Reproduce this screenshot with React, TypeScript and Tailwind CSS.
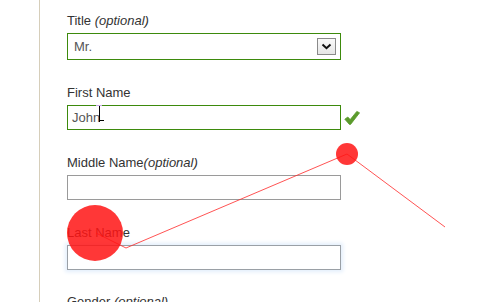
import React from "react";

const FONT = { fontFamily: '"Liberation Sans", Arial, sans-serif' };

function Label({ text, optional, tight }: { text: string; optional?: boolean; tight?: boolean }) {
  return (
    <div className="mb-[5px] h-[15px] text-[13px] leading-[15px] text-[#333]">
      {text}
      {optional && (
        <>
          {tight ? "" : " "}
          <i>(optional)</i>
        </>
      )}
    </div>
  );
}

function ChevronButton() {
  return (
    <div className="absolute right-[4px] top-[4px] flex h-[17px] w-[19px] items-center justify-center border border-[#8a8a8a] bg-gradient-to-b from-[#fafafa] to-[#e6e6e6]">
      <svg width="11" height="7" viewBox="0 0 11 7">
        <path d="M1.5 1.5 L5.5 5.2 L9.5 1.5" fill="none" stroke="#111" strokeWidth="2" />
      </svg>
    </div>
  );
}

function Check() {
  return (
    <svg width="16" height="16" viewBox="0 0 16 16" className="ml-[3px] mt-[5px]">
      <path
        d="M0.8 9.2 L3.8 7 L6.2 9.6 L12.8 1.4 L15.6 2.8 L6.6 14.4 L5.4 14.4 Z"
        fill="#5b9a2c"
        stroke="#5b9a2c"
        strokeWidth="0.8"
        strokeLinejoin="round"
      />
    </svg>
  );
}

export default function App() {
  return (
    <div className="relative h-[302px] w-[487px] overflow-hidden bg-white" style={FONT}>
      <div className="ml-[39px] h-full border-l border-[#d6ceba] pl-[27px] pt-[13px]">
        <Label text="Title" optional />
        <div className="relative h-[27px] w-[274px] border border-[#3d8a0c] bg-white pl-[6px] text-[13px] leading-[25px] text-[#555]">
          Mr.
          <ChevronButton />
        </div>

        <div className="mt-[25px]">
          <Label text="First Name" />
          <div className="flex items-start">
            <div className="relative h-[25px] w-[274px] border border-[#3d8a0c] pl-[4px] text-[13px] leading-[23px] text-[#555]">
              John
              <div className="absolute left-[31px] top-[0px] h-[16px] w-px bg-black" />
              <div className="absolute left-[28px] top-[-1px] h-px w-[6px] bg-[#c9a6e8]" />
              <div className="absolute left-[31px] top-[14px] h-px w-[5px] bg-black" />
            </div>
            <Check />
          </div>
        </div>

        <div className="mt-[25px]">
          <Label text="Middle Name" optional tight />
          <div className="h-[25px] w-[274px] border border-[#9a9a9a]" />
        </div>

        <div className="mt-[25px]">
          <Label text="Last Name" />
          <div className="h-[25px] w-[274px] border border-[#9aa0a6] shadow-[0_0_4px_2px_#e3eefb]" />
        </div>

        <div className="mt-[24px]">
          <Label text="Gender" optional />
        </div>
      </div>

      <svg className="pointer-events-none absolute left-0 top-0" width="487" height="302">
        <polyline
          points="96,233 126,248 347,154 445,227"
          fill="none"
          stroke="rgba(255,40,40,0.8)"
          strokeWidth="1"
        />
        <circle cx="95" cy="233" r="28" fill="rgba(255,20,20,0.85)" />
        <circle cx="347" cy="154" r="11" fill="rgba(255,20,20,0.85)" />
      </svg>
    </div>
  );
}
